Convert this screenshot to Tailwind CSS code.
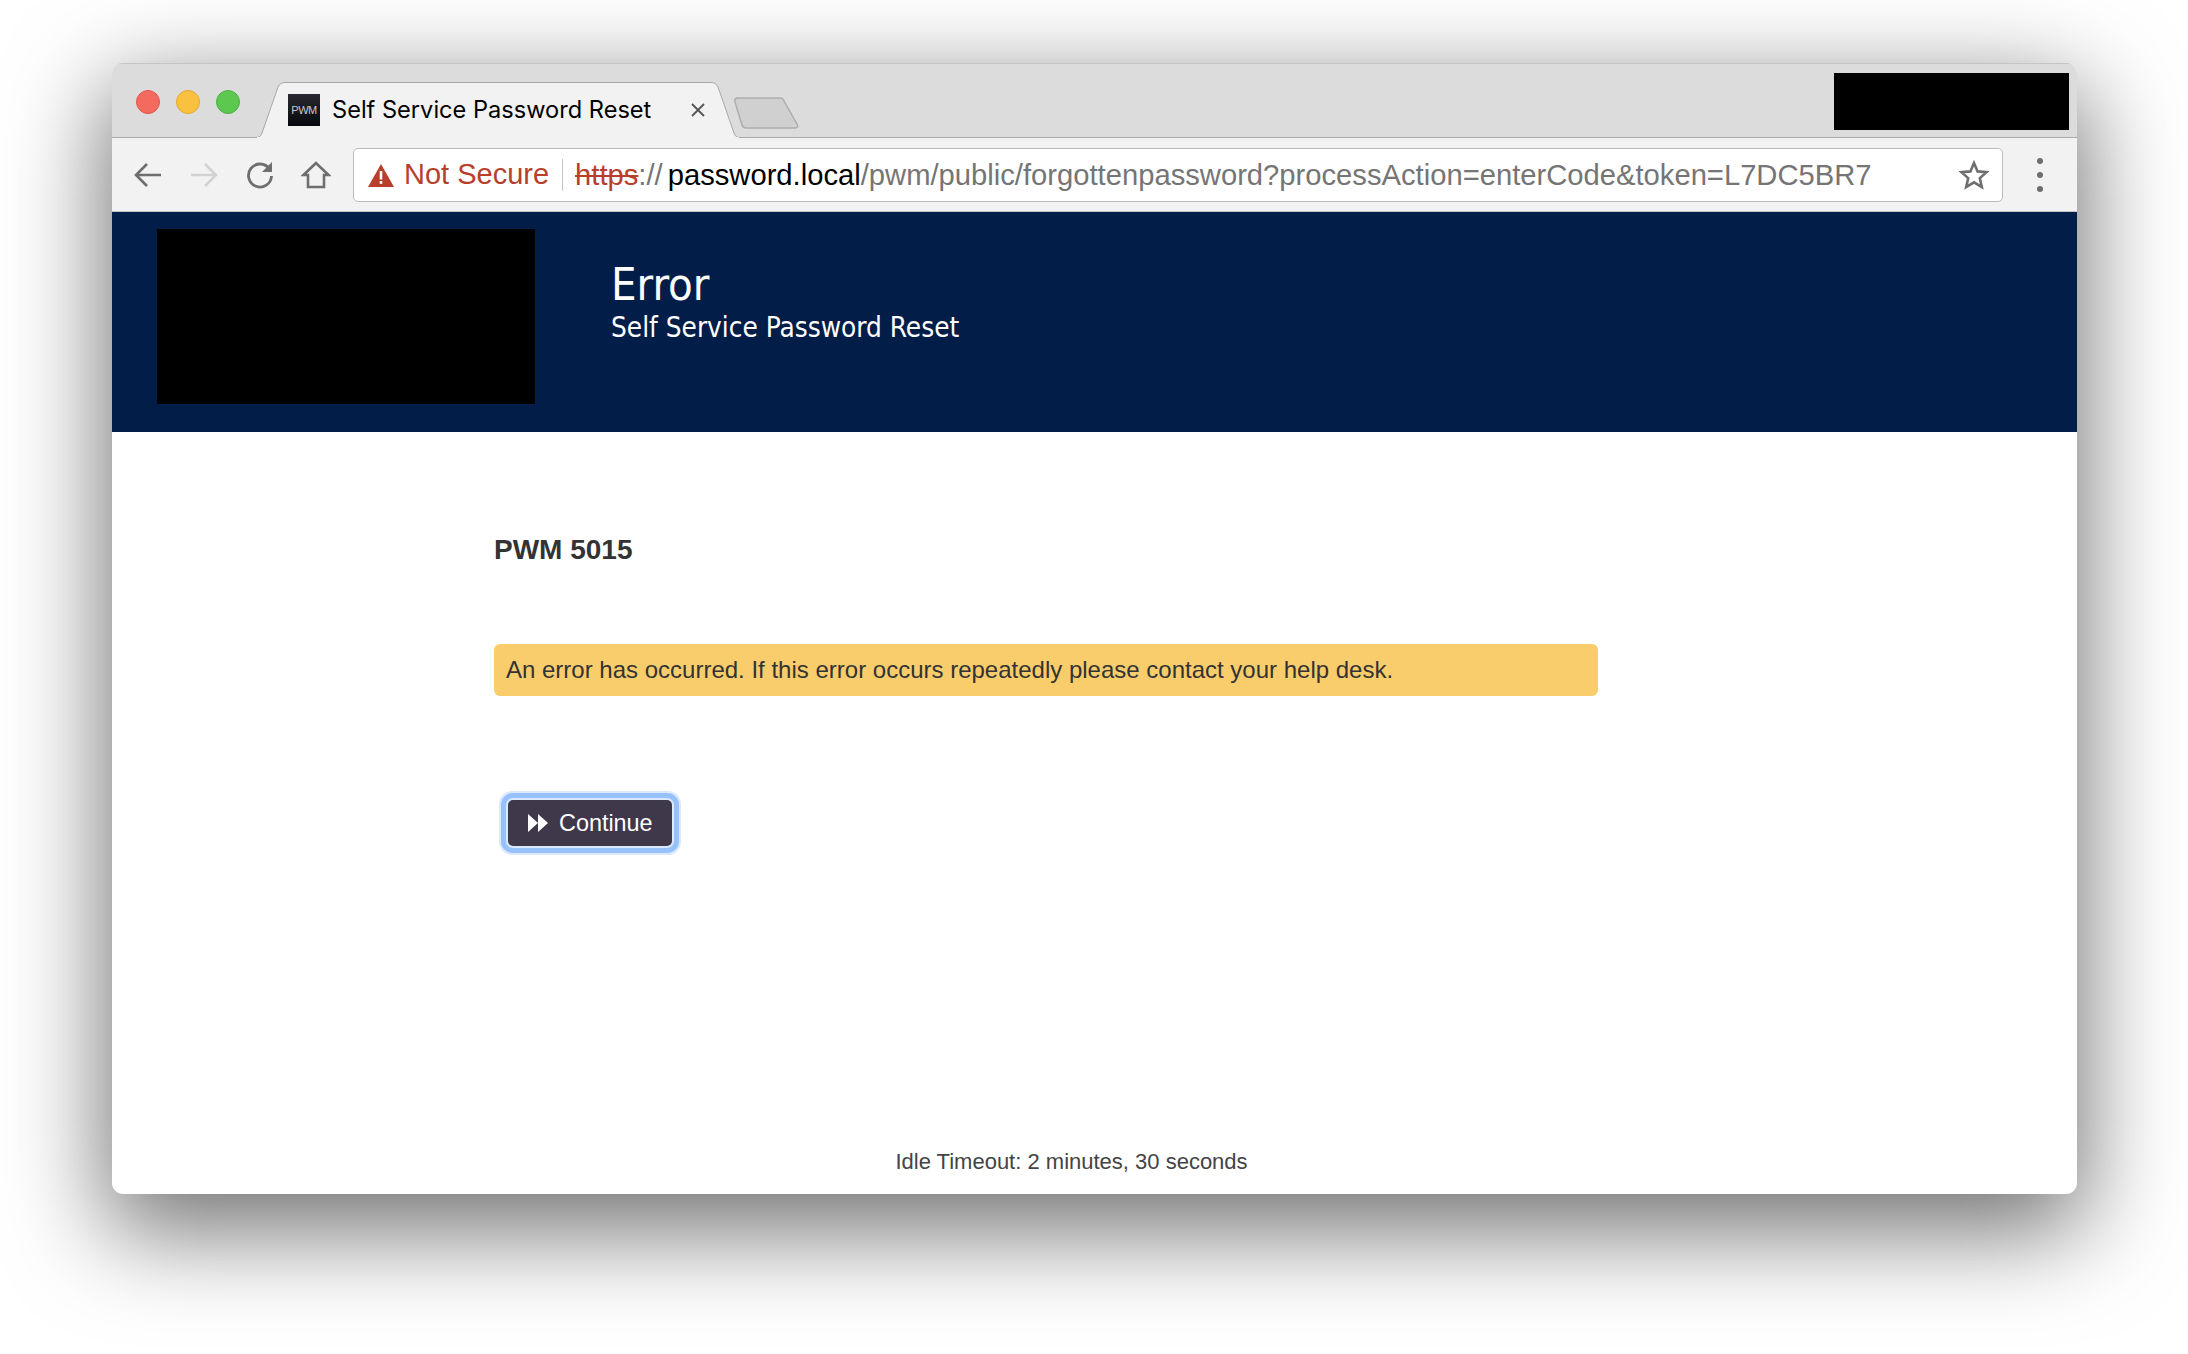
<!DOCTYPE html>
<html lang="en">
<head>
  <meta charset="UTF-8">
  <title>Self Service Password Reset</title>
  <script src="https://cdn.jsdelivr.net/npm/@tailwindcss/browser@4"></script>
</head>
<body class="bg-white w-[2188px] h-[1354px] overflow-hidden font-['Liberation_Sans',sans-serif]">

  <div class="pt-[63px] pl-[112px]">
    <div class="w-[1965px] h-[1131px] rounded-[11px] overflow-hidden flex flex-col bg-white shadow-[0_31px_98px_6px_rgba(0,0,0,0.56)]">

      <!-- tab strip -->
      <div class="h-[75px] shrink-0 bg-[#dcdcdc] border-t border-[#c4c4c4] border-b border-b-[#a8a8a8] flex items-end relative">
        <div class="self-start mt-[26px] ml-[24px] flex gap-[16px]">
          <div class="w-[24px] h-[24px] rounded-full bg-[#f46a5e] border border-[#e0574c]"></div>
          <div class="w-[24px] h-[24px] rounded-full bg-[#fac03f] border border-[#e3a92f]"></div>
          <div class="w-[24px] h-[24px] rounded-full bg-[#5dc84f] border border-[#4db03f]"></div>
        </div>

        <div class="relative ml-[16px] w-[484px] h-[56px] -mb-px flex items-center pl-[32px]">
          <svg class="absolute inset-0" width="484" height="56" viewBox="0 0 484 56">
            <path d="M0 55.5 L3 55 Q5 54 6 51 L22 5 Q24 0.5 29 0.5 L455 0.5 Q460 0.5 462 5 L478 51 Q479 54 481 55 L484 55.5 Z" fill="#f2f2f2" stroke="#a8a8a8"/>
            <rect x="1" y="55" width="482" height="1" fill="#f2f2f2"/>
          </svg>
          <div class="relative w-[32px] h-[32px] bg-gradient-to-b from-[#2a2a30] to-[#08080f] flex items-center justify-center text-[11px] text-[#c9c9c9] tracking-[-0.5px]">PWM</div>
          <span class="relative ml-[12px] text-[23.6px] text-black font-['Inter',sans-serif] w-[320px] whitespace-nowrap">Self Service Password Reset</span>
          <svg class="relative ml-[38px]" width="16" height="16" viewBox="0 0 16 16"><path d="M2 2 L14 14 M14 2 L2 14" stroke="#555" stroke-width="1.8"/></svg>
        </div>

        <svg class="-ml-[7px] mb-[8px]" width="66" height="32" viewBox="0 0 66 32">
          <path d="M2 5 Q1 1 5 1 L47 1 Q50 1 51 4 L64 27 Q66 31 62 31 L13 31 Q10 31 9 28 Z" fill="#d0d0d0" stroke="#adadad" stroke-width="1.5"/>
        </svg>

        <div class="absolute right-[8px] top-[9px] w-[235px] h-[57px] bg-black"></div>
      </div>

      <!-- toolbar -->
      <div class="h-[74px] shrink-0 bg-[#f2f2f2] border-b border-[#c6c6c6] flex items-center pl-[21px] pr-[26px]">
        <svg width="30" height="30" viewBox="0 0 30 30" fill="none" stroke="#6e6e6e" stroke-width="2.6"><path d="M28 15 H3 M14 4 L3 15 L14 26"/></svg>
        <svg class="ml-[26px]" width="30" height="30" viewBox="0 0 30 30" fill="none" stroke="#d2d2d2" stroke-width="2.6"><path d="M2 15 H27 M16 4 L27 15 L16 26"/></svg>
        <svg class="ml-[26px]" width="30" height="30" viewBox="0 0 30 30" fill="none" stroke="#6e6e6e" stroke-width="2.8"><path d="M24.5 9 A11.5 11.5 0 1 0 26.5 16"/><path d="M27 2 V12 H17" fill="#6e6e6e" stroke="none"/></svg>
        <svg class="ml-[26px]" width="30" height="30" viewBox="0 0 30 30" fill="none" stroke="#6e6e6e" stroke-width="2.6"><path d="M15 3 L2.5 15 H7 V27 H23 V15 H27.5 Z"/></svg>

        <div class="ml-[22px] w-[1650px] h-[54px] bg-white border border-[#bcbcbc] rounded-[5px] flex items-center pl-[14px] pr-[13px]">
          <svg width="26" height="24" viewBox="0 0 26 24"><path d="M13 1 L26 24 H0 Z" fill="#b73f2c"/><rect x="11.7" y="8" width="2.6" height="8.5" fill="#fff"/><rect x="11.7" y="18" width="2.6" height="2.8" fill="#fff"/></svg>
          <span class="ml-[10px] pt-[1px] text-[29px] text-[#b73f2c] whitespace-nowrap">Not Secure</span>
          <div class="ml-[13px] w-px h-[32px] bg-[#c4c4c4]"></div>
          <div class="ml-[12px] pt-[2px] text-[29.2px] whitespace-nowrap text-[#757575]"><span class="text-[#b73f2c] line-through">https</span>://<span class="ml-[5px] text-black">password.local</span>/pwm/public/forgottenpassword?processAction=enterCode&amp;token=L7DC5BR7</div>
          <svg class="ml-auto" width="30" height="30" viewBox="0 0 30 30" fill="none" stroke="#6e6e6e" stroke-width="2.6"><path d="M15 3 L18.6 11.4 L27.6 12.2 L20.8 18.1 L22.8 27 L15 22.3 L7.2 27 L9.2 18.1 L2.4 12.2 L11.4 11.4 Z"/></svg>
        </div>

        <div class="ml-[34px] flex flex-col gap-[8px]">
          <div class="w-[6px] h-[6px] rounded-full bg-[#6e6e6e]"></div>
          <div class="w-[6px] h-[6px] rounded-full bg-[#6e6e6e]"></div>
          <div class="w-[6px] h-[6px] rounded-full bg-[#6e6e6e]"></div>
        </div>
      </div>

      <!-- page header -->
      <div class="h-[220px] shrink-0 bg-[#031d49] flex items-start pl-[45px] pt-[17px]">
        <div class="w-[378px] h-[175px] bg-black"></div>
        <div class="ml-[76px] pt-[31px] text-white font-['DejaVu_Sans_Condensed','DejaVu_Sans',sans-serif]">
          <div class="text-[45px] leading-[50px]">Error</div>
          <div class="text-[27.7px] leading-[32px] mt-[2px]">Self Service Password Reset</div>
        </div>
      </div>

      <!-- content -->
      <div class="flex-1 flex flex-col pl-[382px]">
        <h1 class="mt-[102px] text-[28px] leading-[32px] font-bold text-[#333]">PWM 5015</h1>
        <div class="mt-[78px] w-[1104px] h-[52px] bg-[#f9cd6c] rounded-[6px] flex items-center pl-[12px] text-[24px] text-[#333]">An error has occurred. If this error occurs repeatedly please contact your help desk.</div>
        <div class="mt-[104px] ml-[14px] w-[164px] h-[46px] bg-[#3f384a] rounded-[5px] flex items-center text-white text-[23.4px] pl-[20px] shadow-[0_0_0_2px_#dce9fd,0_0_0_7px_#97c1fb,0_0_0_9px_#dce9fd]">
          <svg width="20" height="20" viewBox="0 0 20 20" fill="#fff"><path d="M0 1 L10 10 L0 19 Z M10 1 L20 10 L10 19 Z"/></svg>
          <span class="ml-[11px] pt-[2px]">Continue</span>
        </div>
        <div class="mt-auto mb-[16px] -ml-[382px] pr-[46px] text-center text-[22px] text-[#444]">Idle Timeout: 2 minutes, 30 seconds</div>
      </div>
    </div>
  </div>
</body>
</html>
